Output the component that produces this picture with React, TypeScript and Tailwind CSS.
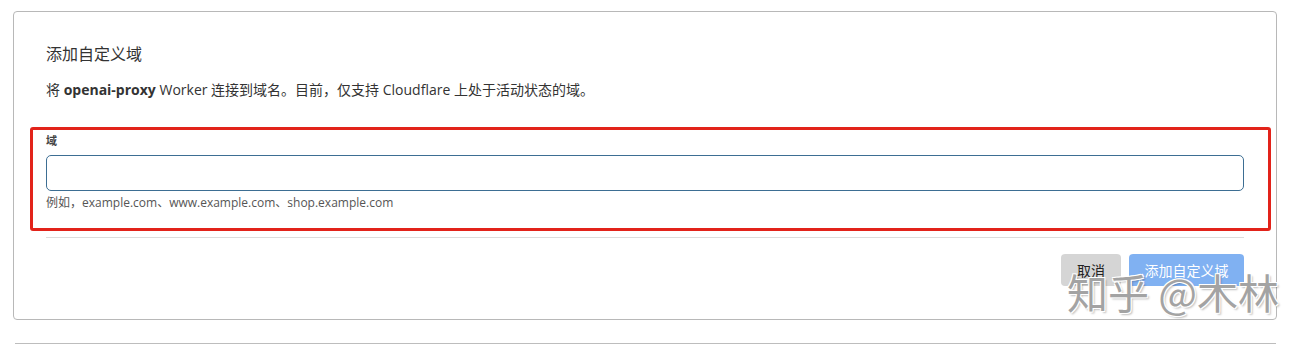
import React from "react";

export default function App() {
  return (
    <div
      className="relative w-[1310px] h-[345px] bg-white overflow-hidden text-[#313131]"
      style={{ fontFamily: '"Open Sans", "Noto Sans CJK SC", sans-serif' }}
    >
      <div className="ml-[13px] mt-[11px] w-[1264px] border border-[#b8b8b8] rounded-[4px] pl-[32px] pr-[32px] pt-[32px] pb-[33px]">
        <div className="text-[16px] leading-[20px] text-[#333]">添加自定义域</div>
        <div className="mt-[16px] text-[14px] leading-[20px] text-[#333]">
          将 <span className="font-bold">openai-proxy</span> Worker 连接到域名。目前，仅支持 Cloudflare 上处于活动状态的域。
        </div>
        <div className="mt-[27px] -ml-[16px] -mr-[27px] border-[3px] border-[#e2231a] rounded-[3px] pl-[13px] pr-[24px] pt-[3px] pb-[17px]">
          <div className="text-[11px] leading-[16px] font-semibold text-[#444]">域</div>
          <div className="mt-[6px] h-[36px] rounded-[5px] border border-[#3d6e93] bg-white"></div>
          <div className="mt-[4px] text-[12px] leading-[16px] text-[#555]">
            例如，example.com、www.example.com、shop.example.com
          </div>
        </div>
        <div className="mt-[6px] h-px bg-[#dcdcdc]"></div>
        <div className="mt-[16px] flex justify-end gap-[8px]">
          <div className="w-[60px] h-[32px] rounded-[4px] bg-[#d5d5d5] flex items-center justify-center text-[14px] text-[#222]">
            取消
          </div>
          <div className="w-[115px] h-[32px] rounded-[4px] bg-[#80b1f2] flex items-center justify-center text-[14px] text-white">
            添加自定义域
          </div>
        </div>
      </div>
      <div className="ml-[15px] mt-[23px] w-[1261px] h-px bg-[#bdbdbd]"></div>
      <div
        className="absolute left-[1067px] top-[267px] text-[41px] leading-[48px] text-[#a3a3a3] whitespace-nowrap"
        style={{
          fontFamily: '"Noto Sans CJK SC", sans-serif',
          textShadow: "1px 1px 0 #fff, -1px -1px 0 #fff, 1px -1px 0 #fff, -1px 1px 0 #fff, 2px 2px 2px rgba(0,0,0,0.25)",
        }}
      >
        知乎 @木林
      </div>
    </div>
  );
}
